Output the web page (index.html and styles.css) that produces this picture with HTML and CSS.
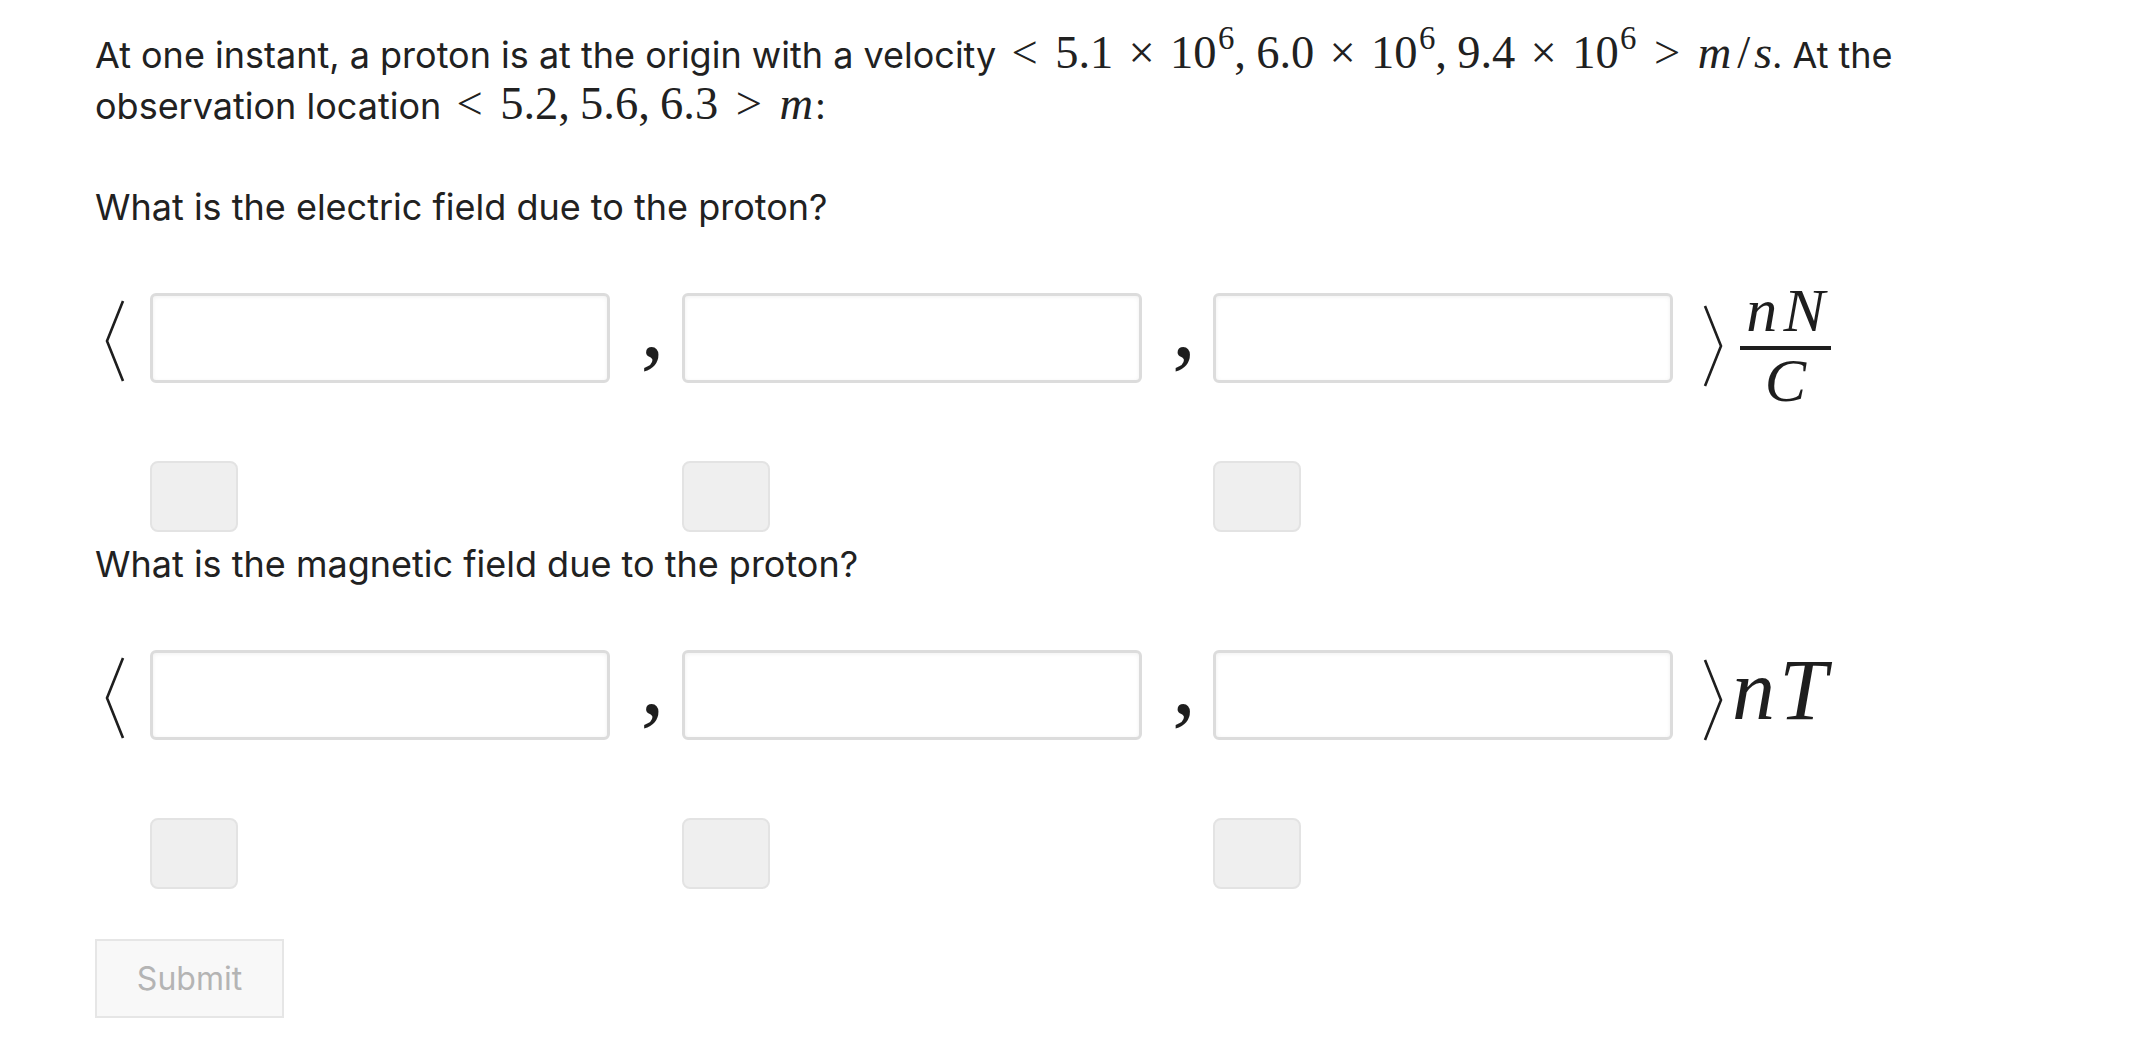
FILE: index.html
```html
<!DOCTYPE html>
<html lang="en">
<head>
<meta charset="utf-8">
<title>Proton fields</title>
<link rel="stylesheet" href="styles.css">
</head>
<body>
<main class="page">
  <p class="prompt"><span class="run">At one instant, a proton is at the origin with a velocity </span><span class="math"><span class="rel lead">&lt;</span><span class="mn">5.1</span><span class="bin">×</span><span class="mn">10</span><sup class="sup">6</sup><span class="punct">,</span><span class="mn">6.0</span><span class="bin">×</span><span class="mn">10</span><sup class="sup">6</sup><span class="punct">,</span><span class="mn">9.4</span><span class="bin">×</span><span class="mn">10</span><sup class="sup">6</sup><span class="rel">&gt;</span><i class="mi m">m</i><span class="mo">/</span><i class="mi">s</i></span><span class="run">. At the</span> <span class="run">observation location </span><span class="math"><span class="rel lead">&lt;</span><span class="mn">5.2</span><span class="punct">,</span><span class="mn">5.6</span><span class="punct">,</span><span class="mn">6.3</span><span class="rel">&gt;</span><i class="mi m">m</i></span><span class="run">:</span></p>

  <section class="question">
    <p class="qtext">What is the electric field due to the proton?</p>
    <div class="vec">
      <svg class="angle open" width="20" height="82" viewBox="0 0 20 82"><polyline points="18,1 2,41 18,81" fill="none" stroke="#1e1e1e" stroke-width="2.6"/></svg>
      <div class="field"><input class="ans" type="text" aria-label="E x"></div>
      <div class="sep"><span class="comma">,</span></div>
      <div class="field"><input class="ans" type="text" aria-label="E y"></div>
      <div class="sep"><span class="comma">,</span></div>
      <div class="field"><input class="ans" type="text" aria-label="E z"></div>
      <div class="close">
        <svg class="angle shut" width="20" height="82" viewBox="0 0 20 82"><polyline points="2,1 18,41 2,81" fill="none" stroke="#1e1e1e" stroke-width="2.6"/></svg>
        <span class="frac"><span class="num">nN</span><span class="bar"></span><span class="den">C</span></span>
      </div>
      <div class="badge c1"></div>
      <div class="badge c2"></div>
      <div class="badge c3"></div>
    </div>
  </section>

  <section class="question second">
    <p class="qtext">What is the magnetic field due to the proton?</p>
    <div class="vec">
      <svg class="angle open" width="20" height="82" viewBox="0 0 20 82"><polyline points="18,1 2,41 18,81" fill="none" stroke="#1e1e1e" stroke-width="2.6"/></svg>
      <div class="field"><input class="ans" type="text" aria-label="B x"></div>
      <div class="sep"><span class="comma">,</span></div>
      <div class="field"><input class="ans" type="text" aria-label="B y"></div>
      <div class="sep"><span class="comma">,</span></div>
      <div class="field"><input class="ans" type="text" aria-label="B z"></div>
      <div class="close tight">
        <svg class="angle shut" width="20" height="82" viewBox="0 0 20 82"><polyline points="2,1 18,41 2,81" fill="none" stroke="#1e1e1e" stroke-width="2.6"/></svg>
        <span class="unit">nT</span>
      </div>
      <div class="badge c1"></div>
      <div class="badge c2"></div>
      <div class="badge c3"></div>
    </div>
  </section>

  <button class="submit" type="button">Submit</button>
</main>
</body>
</html>
```

FILE: styles.css
```css
html, body {
  margin: 0;
  padding: 0;
  background: #ffffff;
}

body {
  font-family: Inter, "Noto Sans", "Liberation Sans", sans-serif;
  font-size: 36px;
  line-height: 51px;
  color: #212121;
}

.page {
  padding: 30px 95px 0 95px;
}

.prompt,
.qtext {
  margin: 0;
}

/* inline math */
.math {
  font-family: "Liberation Serif", "Times New Roman", serif;
  font-size: 46.5px;
  line-height: 1;
  white-space: nowrap;
}

.rel {
  display: inline-block;
  width: 0.778em;
  text-align: center;
  margin: 0 0.27em;
}

.rel.lead {
  margin-left: 0;
}

.bin {
  display: inline-block;
  width: 0.778em;
  text-align: center;
  margin: 0 0.222em;
}

.punct {
  margin-right: 0.22em;
}

.sup {
  font-size: 0.707em;
  line-height: 0;
  vertical-align: 0.58em;
  margin-left: 0.04em;
}

.mi {
  font-style: italic;
}

.mi.m {
  letter-spacing: 0.05em;
}

.mo {
  margin: 0 0.08em;
}

/* questions */
.question {
  margin-top: 50px;
}

.question.second {
  margin-top: 7px;
}

.vec {
  margin-top: 60px;
  display: grid;
  grid-template-columns: 55px 460px 72px 460px 71px 460px auto;
  grid-template-rows: 90px 71px;
  row-gap: 78px;
}

.angle {
  display: block;
}

.angle.open {
  grid-column: 1;
  grid-row: 1;
  align-self: start;
  margin-left: 10px;
  margin-top: 7px;
}

.field {
  grid-row: 1;
}

.ans {
  display: block;
  width: 100%;
  height: 90px;
  box-sizing: border-box;
  border: 3px solid #dcdcdc;
  border-radius: 6px;
  background: #ffffff;
  box-shadow: inset 0 1px 4px rgba(0, 0, 0, 0.06);
  padding: 0 14px;
  font-family: Inter, sans-serif;
  font-size: 32px;
  outline: none;
}

.sep {
  grid-row: 1;
  display: flex;
  justify-content: center;
  align-items: flex-start;
}

.comma {
  font-family: "Liberation Serif", "Times New Roman", serif;
  font-size: 96px;
  line-height: 1;
  margin-top: -16px;
  margin-left: 13px;
  color: #1e1e1e;
}

.close {
  grid-column: 7;
  grid-row: 1;
  display: flex;
  align-items: flex-start;
}

.close .angle.shut {
  margin-left: 30px;
  margin-top: 12px;
}

.close.tight .angle.shut {
  margin-top: 9px;
}

.frac {
  display: inline-flex;
  flex-direction: column;
  align-items: stretch;
  margin-left: 17px;
  margin-top: -14px;
  font-family: "Liberation Serif", "Times New Roman", serif;
  font-style: italic;
  font-size: 62px;
  line-height: 62px;
  color: #1e1e1e;
}

.num,
.den {
  display: block;
  text-align: center;
  letter-spacing: 0.1em;
  text-indent: 0.1em;
}

.bar {
  display: block;
  height: 4px;
  background: #1e1e1e;
  margin: 5px 0 -1px 0;
}

.unit {
  margin-left: 9px;
  margin-top: -3px;
  font-family: "Liberation Serif", "Times New Roman", serif;
  font-style: italic;
  font-size: 86px;
  line-height: 1;
  letter-spacing: 0.05em;
  color: #1e1e1e;
}

.badge {
  grid-row: 2;
  width: 88px;
  height: 71px;
  box-sizing: border-box;
  background: #efefef;
  border: 2px solid #e3e3e3;
  border-radius: 8px;
}

.badge.c1 { grid-column: 2; }
.badge.c2 { grid-column: 4; }
.badge.c3 { grid-column: 6; }

.submit {
  display: block;
  margin-top: 50px;
  width: 189px;
  height: 79px;
  box-sizing: border-box;
  background: #f8f8f8;
  border: 2px solid #e6e6e6;
  border-radius: 0;
  font-family: Inter, "Noto Sans", sans-serif;
  font-size: 32px;
  color: #b4b4b4;
  padding: 0;
}
```
